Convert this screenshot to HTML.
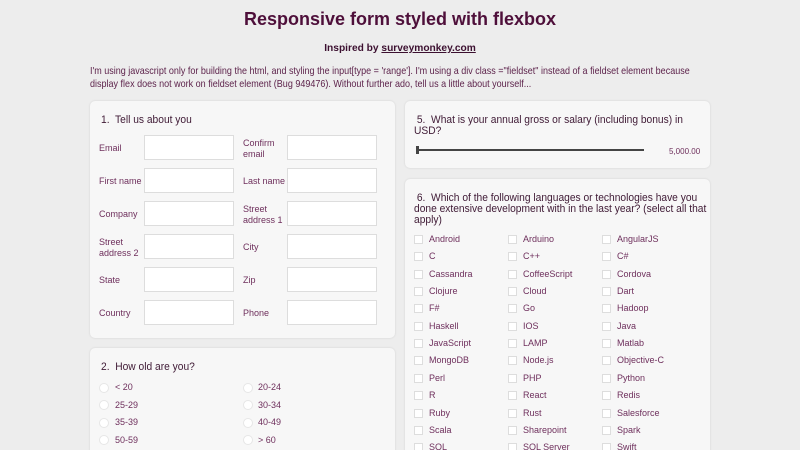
<!DOCTYPE html>
<html><head><meta charset="utf-8"><style>
*{box-sizing:border-box;margin:0;padding:0}
html,body{width:800px;height:450px;overflow:hidden}
body{background:#ededed;font-family:"Liberation Sans",sans-serif;position:relative;color:#5a1f48}
.a{position:absolute}
h1{position:absolute;top:9px;left:0;width:800px;text-align:center;font-size:18px;color:#4e0f3a;font-weight:bold}
.sub{top:43px;left:0;width:800px;text-align:center;font-size:10.2px;font-weight:bold;color:#3c1030}
.sub u{color:#3c1030}
.p{top:65px;left:90px;font-size:10.3px;line-height:13px;color:#5a1f48;white-space:nowrap;transform:scaleX(0.875);transform-origin:0 0}
.card{position:absolute;background:#f7f7f7;border-radius:5px;box-shadow:0 0 2px rgba(0,0,0,.12)}
.q{position:absolute;font-size:11px;color:#3f1a35;line-height:11px;white-space:nowrap;transform:scaleX(0.93);transform-origin:0 0}
.l{position:absolute;font-size:9px;color:#6e2f5c;line-height:11px}
.in{position:absolute;width:90px;height:25px;background:#fff;border:1px solid #ddd}
.cb{position:absolute;width:9px;height:9px;background:#fff;border:1px solid #ddd}
.rd{position:absolute;width:10px;height:10px;border-radius:50%;background:#fff;border:1px solid #e6e6e6}
</style></head><body>
<h1>Responsive form styled with flexbox</h1>
<div class="a sub">Inspired by <u>surveymonkey.com</u></div>
<div class="a p">I'm using javascript only for building the html, and styling the input[type = 'range']. I'm using a div class ="fieldset" instead of a fieldset element because<br>display flex does not work on fieldset element (Bug 949476). Without further ado, tell us a little about yourself...</div>

<div class="card" style="left:90px;top:101px;width:305px;height:237px"></div>
<div class="q" style="left:101px;top:115px">1.&nbsp; Tell us about you</div>
<div class="l" style="left:99px;top:143px">Email</div><div class="in" style="left:144px;top:135px"></div>
<div class="l" style="left:243px;top:138px">Confirm<br>email</div><div class="in" style="left:287px;top:135px"></div>
<div class="l" style="left:99px;top:176px">First name</div><div class="in" style="left:144px;top:168px"></div>
<div class="l" style="left:243px;top:176px">Last name</div><div class="in" style="left:287px;top:168px"></div>
<div class="l" style="left:99px;top:209px">Company</div><div class="in" style="left:144px;top:201px"></div>
<div class="l" style="left:243px;top:204px">Street<br>address 1</div><div class="in" style="left:287px;top:201px"></div>
<div class="l" style="left:99px;top:237px">Street<br>address 2</div><div class="in" style="left:144px;top:234px"></div>
<div class="l" style="left:243px;top:242px">City</div><div class="in" style="left:287px;top:234px"></div>
<div class="l" style="left:99px;top:275px">State</div><div class="in" style="left:144px;top:267px"></div>
<div class="l" style="left:243px;top:275px">Zip</div><div class="in" style="left:287px;top:267px"></div>
<div class="l" style="left:99px;top:308px">Country</div><div class="in" style="left:144px;top:300px"></div>
<div class="l" style="left:243px;top:308px">Phone</div><div class="in" style="left:287px;top:300px"></div>

<div class="card" style="left:90px;top:348px;width:305px;height:120px"></div>
<div class="q" style="left:101px;top:362px">2.&nbsp; How old are you?</div>
<div class="rd" style="left:99px;top:383px"></div><div class="l" style="left:115px;top:382px">&lt; 20</div>
<div class="rd" style="left:243px;top:383px"></div><div class="l" style="left:258px;top:382px">20-24</div>
<div class="rd" style="left:99px;top:400px"></div><div class="l" style="left:115px;top:400px">25-29</div>
<div class="rd" style="left:243px;top:400px"></div><div class="l" style="left:258px;top:400px">30-34</div>
<div class="rd" style="left:99px;top:418px"></div><div class="l" style="left:115px;top:417px">35-39</div>
<div class="rd" style="left:243px;top:418px"></div><div class="l" style="left:258px;top:417px">40-49</div>
<div class="rd" style="left:99px;top:435px"></div><div class="l" style="left:115px;top:435px">50-59</div>
<div class="rd" style="left:243px;top:435px"></div><div class="l" style="left:258px;top:435px">&gt; 60</div>

<div class="card" style="left:405px;top:101px;width:305px;height:67px"></div>
<div class="q" style="left:414px;top:115px">&nbsp;5.&nbsp; What is your annual gross or salary (including bonus) in<br>USD?</div>
<div class="a" style="left:417px;top:149px;width:227px;height:2px;background:#444"></div>
<div class="a" style="left:416px;top:146px;width:3px;height:8px;background:#444"></div>
<div class="l" style="left:669px;top:146px;font-size:8px">5,000.00</div>

<div class="card" style="left:405px;top:179px;width:305px;height:290px"></div>
<div class="q" style="left:414px;top:193px">&nbsp;6.&nbsp; Which of the following languages or technologies have you<br>done extensive development with in the last year? (select all that<br>apply)</div>
<div id="cbs"></div>
<script>
var items=["Android","Arduino","AngularJS","C","C++","C#","Cassandra","CoffeeScript","Cordova","Clojure","Cloud","Dart","F#","Go","Hadoop","Haskell","IOS","Java","JavaScript","LAMP","Matlab","MongoDB","Node.js","Objective-C","Perl","PHP","Python","R","React","Redis","Ruby","Rust","Salesforce","Scala","Sharepoint","Spark","SQL","SQL Server","Swift"];
var h="",cx=[414,508,602];
items.forEach(function(t,i){var r=Math.floor(i/3),c=i%3,y=240+r*17.35;
h+='<div class="cb" style="left:'+cx[c]+'px;top:'+(y-5)+'px"></div><div class="l" style="left:'+(cx[c]+15)+'px;top:'+(y-6)+'px">'+t.replace(/&/g,"&amp;")+'</div>';});
document.getElementById("cbs").innerHTML=h;
</script>
</body></html>
